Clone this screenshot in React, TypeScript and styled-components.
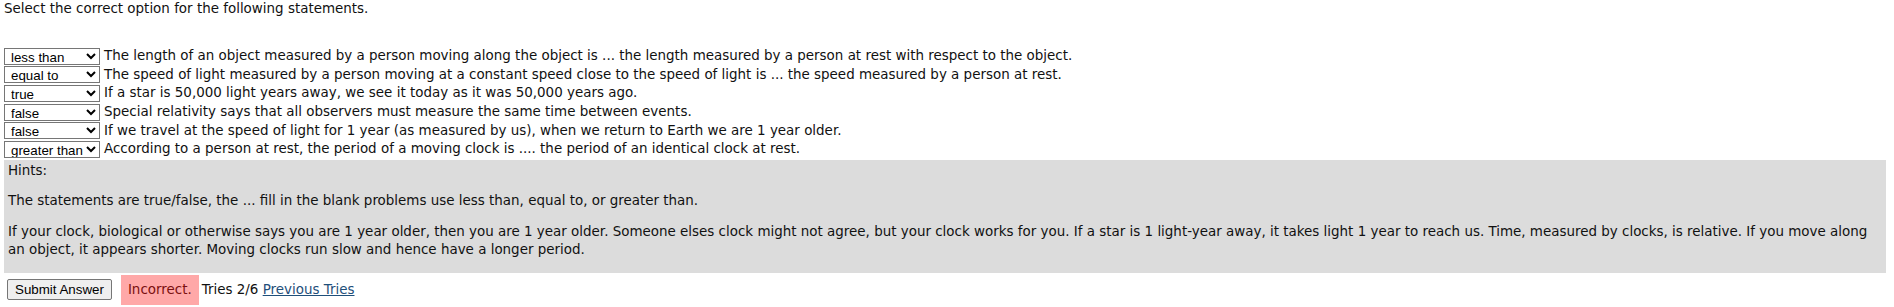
import React from 'react';
import styled, { createGlobalStyle } from 'styled-components';

const GlobalStyle = createGlobalStyle`
  html, body {
    margin: 0;
    padding: 0;
    background: #ffffff;
  }
  body {
    font-family: "DejaVu Sans", Verdana, sans-serif;
    font-size: 13.45px;
    line-height: 18.5px;
    color: #111111;
  }
`;

const Page = styled.div`
  padding: 0 8px 0 4px;
`;

const Prompt = styled.div`
  margin: 0;
`;

const Statements = styled.div`
  display: flex;
  flex-direction: column;
  margin-top: 28.5px;
`;

const Row = styled.div`
  display: flex;
  align-items: center;
  gap: 4px;
  height: 18.67px;
  white-space: nowrap;
`;

const Choice = styled.select`
  width: 96px;
  height: 17px;
  margin: 0;
  padding: 0 0 0 2px;
  font-family: "Liberation Sans", Arial, sans-serif;
  font-size: 13.33px;
  color: #000000;
  background: #ffffff;
  border: 1px solid #767676;
  border-radius: 0;
`;

const HintBox = styled.div`
  margin-top: 1px;
  padding: 2px 4px 13px 4px;
  background: #dcdcdc;
`;

const HintPara = styled.p`
  margin: 12px 0 0;
  &:first-child {
    margin-top: 0;
  }
`;

const Footer = styled.div`
  display: flex;
  align-items: center;
  margin-top: 2px;
  height: 30px;
`;

const SubmitButton = styled.button`
  margin: 0 9px 0 3px;
  height: 21px;
  padding: 0 7px;
  font-family: "Liberation Sans", Arial, sans-serif;
  font-size: 13.33px;
  color: #000000;
  background: #efefef;
  border: 1px solid #767676;
  border-radius: 2px;
`;

const Verdict = styled.span`
  display: flex;
  align-items: center;
  height: 30px;
  padding: 0 7px;
  background: #ffa8a8;
  color: #7a1010;
`;

const Tries = styled.span`
  margin-left: 3px;
`;

const TriesLink = styled.a`
  color: #1f4f7a;
  text-decoration: underline;
`;

const rows: { value: string; text: string }[] = [
  { value: 'less than', text: 'The length of an object measured by a person moving along the object is ... the length measured by a person at rest with respect to the object.' },
  { value: 'equal to', text: 'The speed of light measured by a person moving at a constant speed close to the speed of light is ... the speed measured by a person at rest.' },
  { value: 'true', text: 'If a star is 50,000 light years away, we see it today as it was 50,000 years ago.' },
  { value: 'false', text: 'Special relativity says that all observers must measure the same time between events.' },
  { value: 'false', text: 'If we travel at the speed of light for 1 year (as measured by us), when we return to Earth we are 1 year older.' },
  { value: 'greater than', text: 'According to a person at rest, the period of a moving clock is .... the period of an identical clock at rest.' },
];

const options = ['Select', 'less than', 'equal to', 'greater than', 'true', 'false'];

export default function App() {
  return (
    <Page>
      <GlobalStyle />
      <Prompt>Select the correct option for the following statements.</Prompt>
      <Statements>
        {rows.map((row, i) => (
          <Row key={i}>
            <Choice defaultValue={row.value}>
              {options.map((o) => (
                <option key={o} value={o}>{o}</option>
              ))}
            </Choice>
            <span>{row.text}</span>
          </Row>
        ))}
      </Statements>
      <HintBox>
        <HintPara>Hints:</HintPara>
        <HintPara>The statements are true/false, the ... fill in the blank problems use less than, equal to, or greater than.</HintPara>
        <HintPara>
          If your clock, biological or otherwise says you are 1 year older, then you are 1 year older. Someone elses clock might not agree, but your clock works for you. If a star is 1 light-year away, it takes light 1 year to reach us. Time, measured by clocks, is relative. If you move along an object, it appears shorter. Moving clocks run slow and hence have a longer period.
        </HintPara>
      </HintBox>
      <Footer>
        <SubmitButton type="button">Submit Answer</SubmitButton>
        <Verdict>Incorrect.</Verdict>
        <Tries>
          Tries 2/6 <TriesLink href="#">Previous Tries</TriesLink>
        </Tries>
      </Footer>
    </Page>
  );
}
